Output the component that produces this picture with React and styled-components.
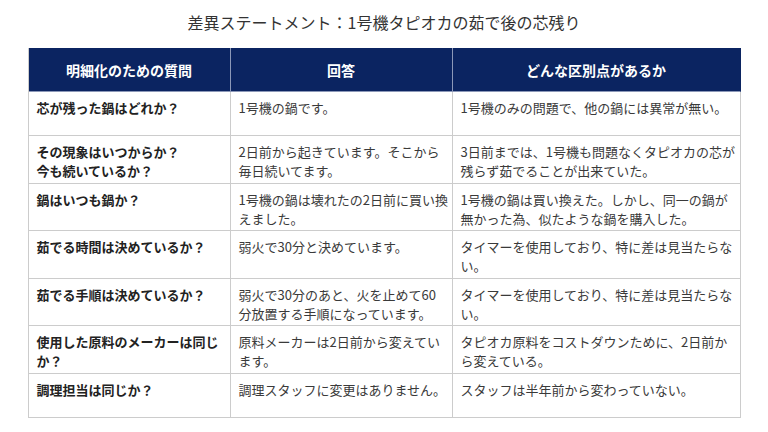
import React from 'react';
import styled, { createGlobalStyle } from 'styled-components';

const GlobalStyle = createGlobalStyle`
  html, body {
    margin: 0;
    padding: 0;
    background: #ffffff;
  }
  body {
    font-family: "Noto Sans CJK JP", "Noto Sans", sans-serif;
    color: #333333;
  }
`;

const Page = styled.div`
  width: 768px;
  height: 432px;
  display: flex;
  flex-direction: column;
  align-items: center;
`;

const Title = styled.h1`
  margin: 0;
  height: 48px;
  display: flex;
  align-items: center;
  font-size: 16px;
  font-weight: 400;
  color: #333333;
  padding-bottom: 4px;
  box-sizing: border-box;
`;

const Table = styled.div`
  width: 713px;
  display: grid;
  grid-template-columns: 202px 222px 1fr;
  grid-template-rows: 44px 44px 48px 47px 48px 47px 48px 44px;
  border-left: 1px solid #cccccc;
  box-sizing: border-box;
`;

const HeadCell = styled.div`
  background: #0b2461;
  color: #ffffff;
  font-size: 14px;
  font-weight: 700;
  display: flex;
  align-items: center;
  justify-content: center;
  border-right: 1px solid ${p => (p.$last ? '#0b2461' : '#8c98b8')};
  border-bottom: 1px solid #8c98b8;
`;

const Cell = styled.div`
  padding: 6px 8px 0 8px;
  font-size: 13px;
  line-height: 19px;
  font-weight: ${p => (p.$bold ? 700 : 400)};
  color: ${p => (p.$bold ? '#222222' : '#3a3a3a')};
  border-right: 1px solid #cccccc;
  border-bottom: 1px solid #cccccc;
  white-space: nowrap;
  overflow: hidden;
`;

const rows = [
  [['芯が残った鍋はどれか？'], ['1号機の鍋です。'], ['1号機のみの問題で、他の鍋には異常が無い。']],
  [
    ['その現象はいつからか？', '今も続いているか？'],
    ['2日前から起きています。そこから', '毎日続いてます。'],
    ['3日前までは、1号機も問題なくタピオカの芯が', '残らず茹でることが出来ていた。'],
  ],
  [
    ['鍋はいつも鍋か？'],
    ['1号機の鍋は壊れたの2日前に買い換', 'えました。'],
    ['1号機の鍋は買い換えた。しかし、同一の鍋が', '無かった為、似たような鍋を購入した。'],
  ],
  [['茹でる時間は決めているか？'], ['弱火で30分と決めています。'], ['タイマーを使用しており、特に差は見当たらな', 'い。']],
  [
    ['茹でる手順は決めているか？'],
    ['弱火で30分のあと、火を止めて60', '分放置する手順になっています。'],
    ['タイマーを使用しており、特に差は見当たらな', 'い。'],
  ],
  [
    ['使用した原料のメーカーは同じ', 'か？'],
    ['原料メーカーは2日前から変えてい', 'ます。'],
    ['タピオカ原料をコストダウンために、2日前か', 'ら変えている。'],
  ],
  [['調理担当は同じか？'], ['調理スタッフに変更はありません。'], ['スタッフは半年前から変わっていない。']],
];

const Lines = ({ lines }) =>
  lines.map((l, i) => (
    <React.Fragment key={i}>
      {i > 0 && <br />}
      {l}
    </React.Fragment>
  ));

export default function App() {
  return (
    <>
      <GlobalStyle />
      <Page>
        <Title>差異ステートメント：1号機タピオカの茹で後の芯残り</Title>
        <Table>
          <HeadCell>明細化のための質問</HeadCell>
          <HeadCell>回答</HeadCell>
          <HeadCell $last>どんな区別点があるか</HeadCell>
          {rows.map((r, i) => (
            <React.Fragment key={i}>
              <Cell $bold><Lines lines={r[0]} /></Cell>
              <Cell><Lines lines={r[1]} /></Cell>
              <Cell><Lines lines={r[2]} /></Cell>
            </React.Fragment>
          ))}
        </Table>
      </Page>
    </>
  );
}
